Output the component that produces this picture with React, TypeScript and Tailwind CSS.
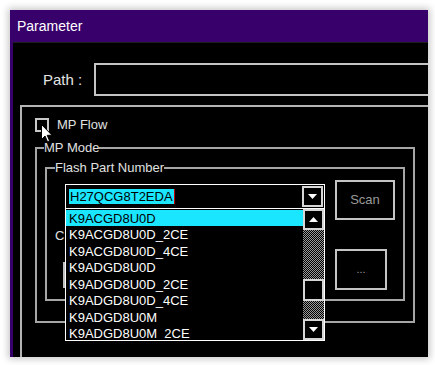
import React from "react";

const items = [
  "K9ACGD8U0D",
  "K9ACGD8U0D_2CE",
  "K9ACGD8U0D_4CE",
  "K9ADGD8U0D",
  "K9ADGD8U0D_2CE",
  "K9ADGD8U0D_4CE",
  "K9ADGD8U0M",
  "K9ADGD8U0M_2CE",
];

const Down = () => (
  <svg width="9" height="5" viewBox="0 0 9 5">
    <path d="M0 0 L9 0 L4.5 5 Z" fill="#fff" />
  </svg>
);

const Up = () => (
  <svg width="9" height="5" viewBox="0 0 9 5">
    <path d="M0 5 L9 5 L4.5 0 Z" fill="#fff" />
  </svg>
);

const dither =
  "bg-[image:repeating-conic-gradient(#9a9a9a_0%_25%,#000_0%_50%)] bg-[length:2px_2px]";

const App = () => {
  return (
    <div
      className="relative w-[435px] h-[365px] bg-white p-[10px] overflow-hidden"
      style={{ fontFamily: '"Liberation Sans", Arial, sans-serif' }}
    >
      <div className="w-[418px] h-[347px] flex flex-col shadow-[0_0_7px_2px_rgba(0,0,0,0.22)]">
        {/* title bar */}
        <div className="h-[32px] shrink-0 bg-[#38006b] pl-[7px] flex items-center text-[14px] text-white">
          Parameter
        </div>

        {/* body */}
        <div className="flex-1 bg-black border-l-[3px] border-[#38006b] overflow-hidden">
          <div className="h-full border-t border-[#1e1e1e] flex flex-col">
            <div className="flex items-center mt-[20px] pl-[30px] gap-[10px]">
              <span className="text-[15px] leading-[18px] text-[#e4e4e4] w-[41px] shrink-0">Path :</span>
              <div className="w-[400px] h-[33px] shrink-0 border-2 border-[#c4c4c4]" />
            </div>

            <div className="ml-[7px] mt-[9px] w-[450px] h-[300px] shrink-0 border-2 border-[#b4b4b4]">
              <div className="flex items-center gap-[8px] mt-[11px] ml-[13px] text-[13px] leading-[14px] text-[#e0e0e0]">
                <div className="w-[14px] h-[14px] border-2 border-[#c8c8c8]" />
                <span>MP Flow</span>
              </div>

              <fieldset className="ml-[13px] mt-[9px] w-[380px] h-[182px] border-2 border-[#a6a6a6]">
                <legend className="ml-[7px] text-[13px] leading-[14px] text-[#e0e0e0]">MP Mode</legend>

                <fieldset className="ml-[8px] mt-[6px] w-[360px] h-[140px] border-2 border-[#a6a6a6]">
                  <legend className="ml-[8px] text-[13px] leading-[14px] text-[#e0e0e0]">Flash Part Number</legend>

                  <div className="flex mt-[5px]">
                    <div className="ml-[8px] w-[270px] flex flex-col">
                      <div className="relative ml-[10px] mt-[4px] w-[260px] h-[25px] border border-white flex items-center pl-[3px]">
                        <span className="bg-[#1be6ff] text-black text-[13px] leading-[15px] px-[1px]">H27QCG8T2EDA</span>
                        <span className="w-[1px] h-[15px] bg-[#c00000]" />
                        <div className="ml-auto mr-[1px] w-[21px] h-[21px] border-2 border-[#d6d6d6] bg-black flex items-center justify-center">
                          <Down />
                        </div>

                        {/* open list */}
                        <div className="absolute top-full left-[-1px] w-[260px] h-[133px] z-10 bg-black border border-white flex">
                          <div className="flex-1 pt-[1px] text-[13px] text-white">
                            {items.map((t, i) => (
                              <div
                                key={t}
                                className={
                                  "h-[16.43px] leading-[18px] pl-[3px] " +
                                  (i === 0 ? "bg-[#1be6ff] text-black" : "")
                                }
                              >
                                {t}
                              </div>
                            ))}
                          </div>
                          <div className="w-[21px] flex flex-col">
                            <div className="h-[21px] border-2 border-[#d6d6d6] flex items-center justify-center">
                              <Up />
                            </div>
                            <div className={"h-[49px] " + dither} />
                            <div className="h-[22px] border-2 border-[#d6d6d6] bg-black" />
                            <div className={"h-[18px] " + dither} />
                            <div className="h-[21px] border-2 border-[#d6d6d6] flex items-center justify-center">
                              <Down />
                            </div>
                          </div>
                        </div>
                      </div>
                      <span className="mt-[20px] w-[10px] text-[13px] leading-[14px] text-[#e0e0e0]">C</span>
                      <div className="ml-[8px] mt-[19px] w-[200px] h-[26px] border-2 border-[#c0c0c0]" />
                    </div>

                    <div className="ml-[10px] flex flex-col">
                      <div className="w-[60px] h-[40px] border-2 border-[#c4c4c4] flex items-center justify-center text-[13px] text-[#9a9a9a]">
                        Scan
                      </div>
                      <div className="mt-[29px] w-[52px] h-[41px] border-2 border-[#c4c4c4] flex items-center justify-center text-[11px] text-[#9a9a9a]">
                        ...
                      </div>
                    </div>
                  </div>
                </fieldset>
              </fieldset>
            </div>
          </div>
        </div>
      </div>

      {/* mouse pointer */}
      <svg className="absolute left-[41px] top-[124px] z-20" width="12" height="19" viewBox="0 0 12 19">
        <path d="M0.5 0.5 L0.5 15.5 L4 12 L6.5 17.8 L8.6 16.9 L6.2 11.3 L11 11.3 Z" fill="#fff" stroke="#000" strokeWidth="1" />
      </svg>
    </div>
  );
};

export default App;
